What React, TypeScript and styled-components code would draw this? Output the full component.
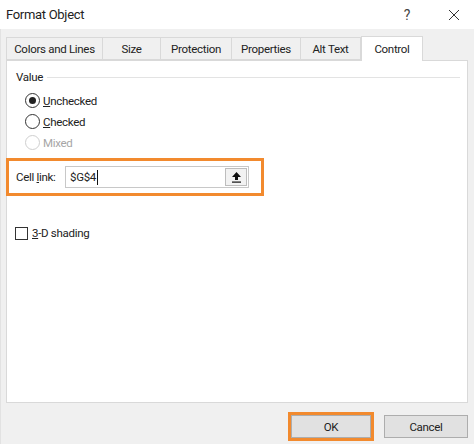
import styled, {createGlobalStyle} from 'styled-components';

const GlobalStyle = createGlobalStyle`
  html, body {
    margin: 0;
    padding: 0;
    background: #ffffff;
  }
  body {
    font-family: Roboto, "Noto Sans", sans-serif;
    font-size: 11.5px;
    letter-spacing: -0.3px;
    color: #1a1a1a;
  }
`;

const tabs = [
  {label: 'Colors and Lines', width: 97},
  {label: 'Size', width: 58},
  {label: 'Protection', width: 71},
  {label: 'Properties', width: 69},
  {label: 'Alt Text', width: 60},
  {label: 'Control', width: 62, active: true},
];

const options = [
  {label: 'Unchecked', key: 'U', checked: true},
  {label: 'Checked', key: 'C'},
  {label: 'Mixed', disabled: true},
];

const Underlined = ({text, mark}: {text: string; mark?: string}) => {
  if (!mark) return <span>{text}</span>;
  const i = text.indexOf(mark);
  return (
    <span>
      {text.slice(0, i)}
      <u>{text[i]}</u>
      {text.slice(i + 1)}
    </span>
  );
};

const App = () => {
  return (
    <Window>
      <GlobalStyle />
      <TitleBar>
        <Title>Format Object</Title>
        <TitleActions>
          <Help>?</Help>
          <svg width="12" height="12" viewBox="0 0 12 12">
            <path d="M1 1 L11 11 M11 1 L1 11" stroke="#333" strokeWidth="1" fill="none" />
          </svg>
        </TitleActions>
      </TitleBar>
      <Body>
        <TabRow>
          {tabs.map(t => (
            <Tab key={t.label} $width={t.width} $active={!!t.active}>
              {t.label}
            </Tab>
          ))}
        </TabRow>
        <Panel>
          <GroupHeader>
            <GroupLabel>Value</GroupLabel>
            <GroupLine />
          </GroupHeader>
          <RadioList>
            {options.map(o => (
              <RadioRow key={o.label} $disabled={!!o.disabled}>
                <Radio $checked={!!o.checked} $disabled={!!o.disabled} />
                <Underlined text={o.label} mark={o.key} />
              </RadioRow>
            ))}
          </RadioList>
          <Highlight>
            <FieldLabel>
              Cell <u>l</u>ink:
            </FieldLabel>
            <Input>
              <InputText>$G$4</InputText>
              <Caret />
              <PickButton>
                <svg width="11" height="12" viewBox="0 0 11 12">
                  <path d="M5.5 1 L10 6 L7 6 L7 9 L4 9 L4 6 L1 6 Z" fill="#111" />
                  <rect x="1" y="10.5" width="9" height="1.2" fill="#111" />
                </svg>
              </PickButton>
            </Input>
          </Highlight>
          <CheckRow>
            <CheckBox />
            <span>
              <u>3</u>-D shading
            </span>
          </CheckRow>
        </Panel>
        <Footer>
          <FocusRing>
            <Button>OK</Button>
          </FocusRing>
          <Button $wide>Cancel</Button>
        </Footer>
      </Body>
    </Window>
  );
};

export default App;

const Window = styled.div`
  width: 474px;
  height: 444px;
  display: flex;
  flex-direction: column;
  overflow: hidden;
`;

const TitleBar = styled.div`
  height: 29px;
  display: flex;
  align-items: center;
  justify-content: space-between;
  background: #ffffff;
  padding: 0 14px 0 6px;
`;

const Title = styled.div`
  font-size: 13px;
  letter-spacing: -0.3px;
  color: #222;
`;

const TitleActions = styled.div`
  display: flex;
  align-items: center;
  gap: 38px;
`;

const Help = styled.span`
  font-size: 14px;
  color: #444;
`;

const Body = styled.div`
  flex: 1;
  background: #f0f0f0;
  display: flex;
  flex-direction: column;
  padding: 7px 6px 0 5px;
  border-left: 1px solid #e2e2e2;
`;

const TabRow = styled.div`
  display: flex;
  align-items: flex-end;
  height: 24px;
`;

const Tab = styled.div<{$width: number; $active: boolean}>`
  width: ${p => p.$width}px;
  height: ${p => (p.$active ? 25 : 23)}px;
  display: flex;
  align-items: center;
  justify-content: center;
  box-sizing: border-box;
  background: ${p => (p.$active ? '#ffffff' : '#f0f0f0')};
  border: 1px solid #d9d9d9;
  border-left: ${p => (p.$active ? '1px solid #d9d9d9' : 'none')};
  border-bottom: ${p => (p.$active ? 'none' : '1px solid #d9d9d9')};
  margin-bottom: ${p => (p.$active ? -1 : 0)}px;
  position: relative;
  z-index: ${p => (p.$active ? 1 : 0)};
  color: #222;
  white-space: nowrap;

  &:first-child {
    border-left: 1px solid #d9d9d9;
  }
`;

const Panel = styled.div`
  height: 343px;
  background: #ffffff;
  border: 1px solid #d9d9d9;
  box-sizing: border-box;
  display: flex;
  flex-direction: column;
`;

const GroupHeader = styled.div`
  display: flex;
  align-items: center;
  gap: 4px;
  margin: 8px 7px 0 9px;
  height: 16px;
`;

const GroupLabel = styled.span`
  color: #222;
`;

const GroupLine = styled.div`
  flex: 1;
  height: 1px;
  background: #e3e3e3;
`;

const RadioList = styled.div`
  display: flex;
  flex-direction: column;
  margin: 5px 0 0 18px;
`;

const RadioRow = styled.div<{$disabled: boolean}>`
  display: flex;
  align-items: center;
  gap: 3px;
  height: 21px;
  color: ${p => (p.$disabled ? '#a6a6a6' : '#222')};
`;

const Radio = styled.span<{$checked: boolean; $disabled: boolean}>`
  width: 13px;
  height: 13px;
  border-radius: 50%;
  border: 1px solid ${p => (p.$disabled ? '#cfcfcf' : '#333')};
  background: #ffffff;
  display: flex;
  align-items: center;
  justify-content: center;

  &::after {
    content: '';
    display: ${p => (p.$checked ? 'block' : 'none')};
    width: 7px;
    height: 7px;
    border-radius: 50%;
    background: #222;
  }
`;

const Highlight = styled.div`
  margin: 5px 0 0 -1px;
  width: 258px;
  height: 38px;
  box-sizing: border-box;
  border: 3px solid #f28a2e;
  display: flex;
  align-items: center;
  padding-left: 7px;
`;

const FieldLabel = styled.span`
  width: 49px;
  color: #222;
`;

const Input = styled.div`
  width: 184px;
  height: 22px;
  box-sizing: border-box;
  border: 1px solid #c8c8c8;
  display: flex;
  align-items: center;
  padding-left: 4px;
`;

const InputText = styled.span`
  color: #222;
`;

const Caret = styled.span`
  width: 1px;
  height: 15px;
  background: #111;
  margin-left: 1px;
`;

const PickButton = styled.div`
  margin-left: auto;
  margin-right: 1px;
  width: 22px;
  height: 18px;
  box-sizing: border-box;
  background: #f2f2f2;
  border: 1px solid #bdbdbd;
  display: flex;
  align-items: center;
  justify-content: center;
`;

const CheckRow = styled.div`
  display: flex;
  align-items: center;
  gap: 4px;
  margin: 30px 0 0 8px;
  color: #222;
`;

const CheckBox = styled.span`
  width: 13px;
  height: 13px;
  box-sizing: border-box;
  border: 1px solid #333;
  background: #ffffff;
`;

const Footer = styled.div`
  display: flex;
  justify-content: flex-end;
  align-items: center;
  gap: 10px;
  padding-top: 9px;
`;

const FocusRing = styled.div`
  border: 3px solid #f28a2e;
  display: flex;
`;

const Button = styled.div<{$wide?: boolean}>`
  width: ${p => (p.$wide ? 84 : 80)}px;
  height: 23px;
  box-sizing: border-box;
  background: #e1e1e1;
  border: 1px solid #adadad;
  display: flex;
  align-items: center;
  justify-content: center;
  color: #222;
`;
